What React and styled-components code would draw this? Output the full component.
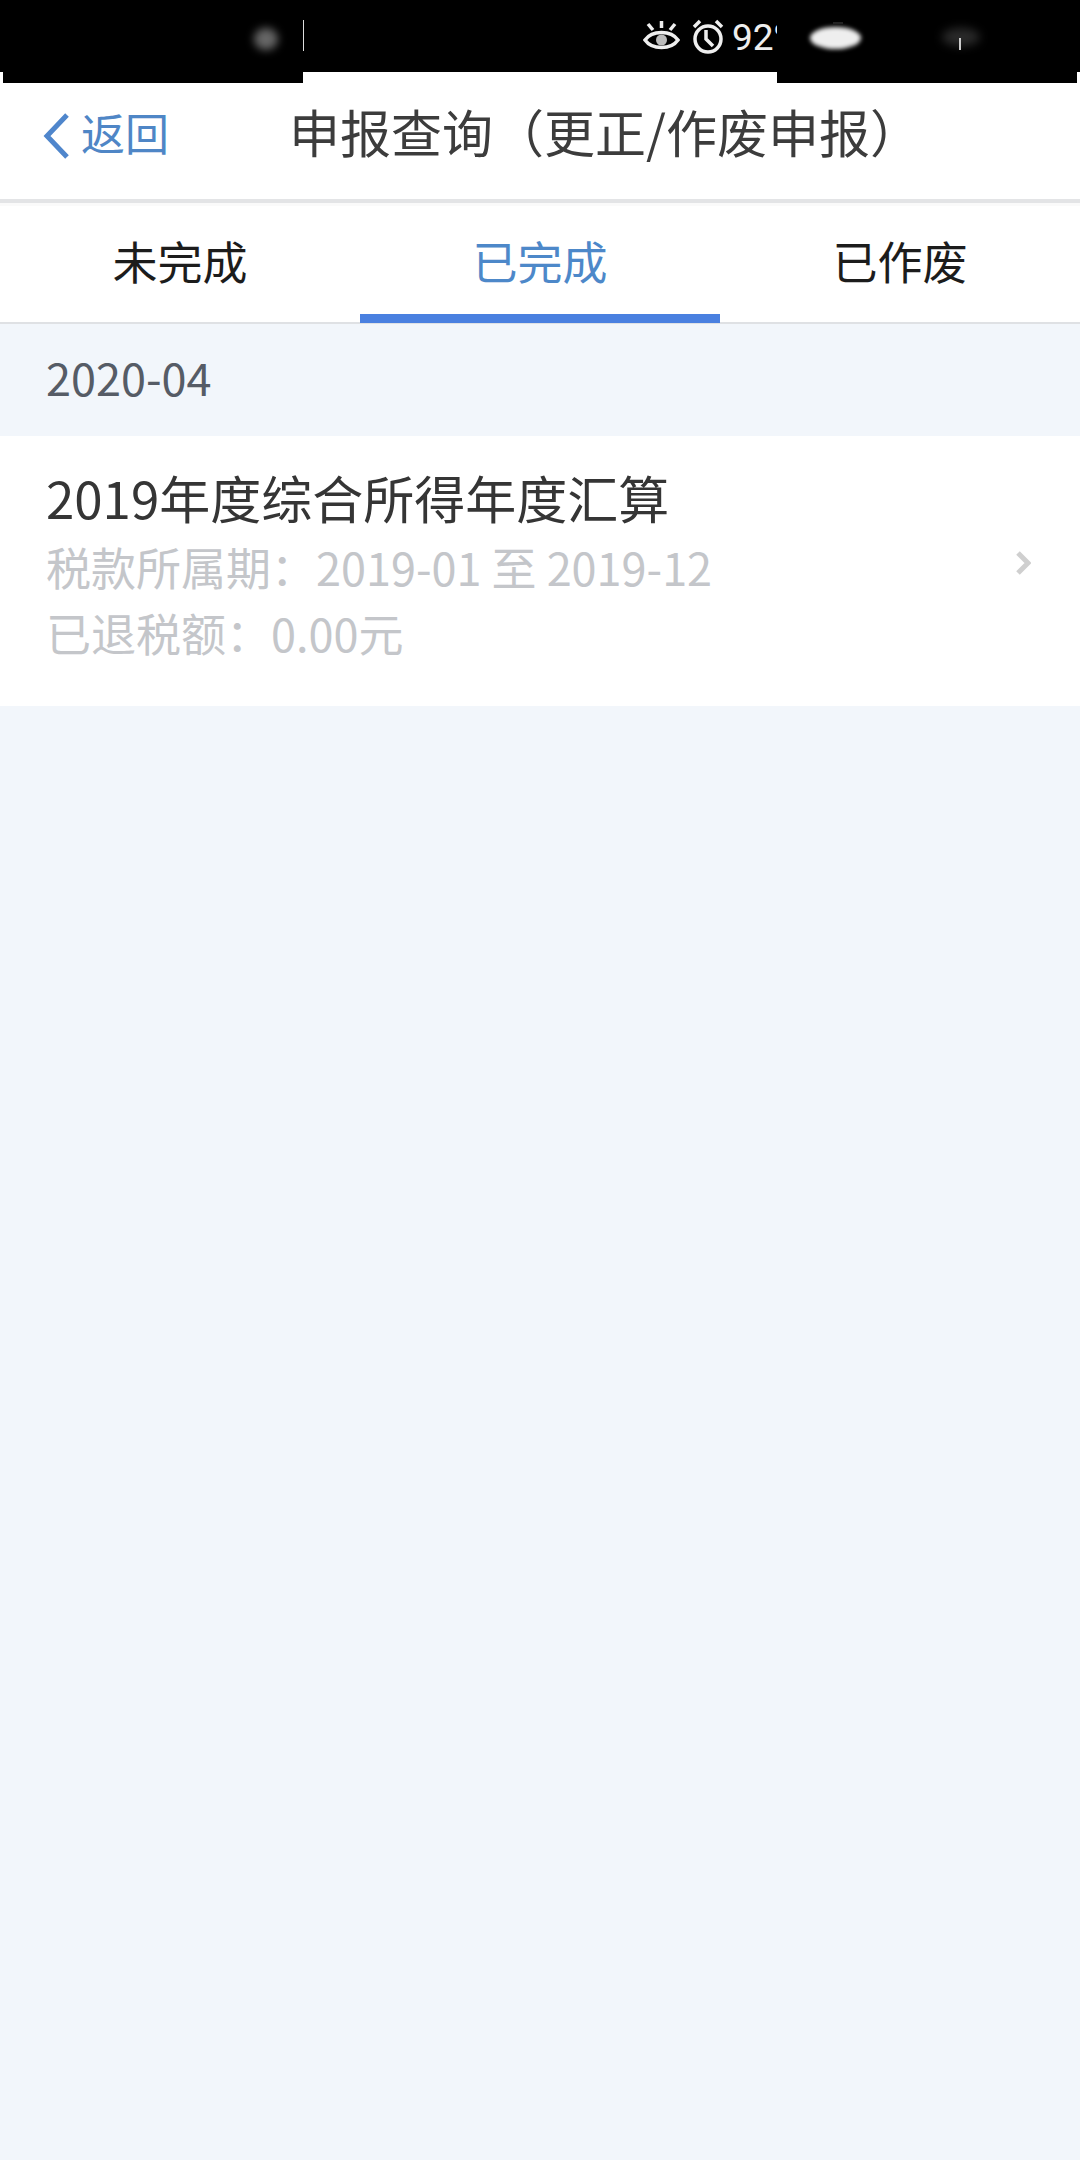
import React from 'react';
import styled, { createGlobalStyle } from 'styled-components';

const Global = createGlobalStyle`
	html, body {
		margin: 0;
		padding: 0;
		background: #f2f6fb;
	}
	body {
		font-family: "Noto Sans CJK SC", "Noto Sans", sans-serif;
	}
`;

const Page = styled.div`
	width: 1080px;
	height: 2160px;
	background: #f2f6fb;
	overflow: hidden;
`;

const StatusBar = styled.div`
	position: relative;
	height: 72px;
	background: #000;
	display: flex;
	align-items: center;
	padding-left: 643px;
	gap: 8px;
	color: #eee;
`;

const EyeIcon = styled.svg`
	display: block;
	margin-right: 4px;
`;

const Battery = styled.span`
	font-family: Roboto, sans-serif;
	font-size: 37px;
	line-height: 1;
	white-space: nowrap;
	margin-top: 2px;
`;

const Mask = styled.div`
	position: absolute;
	top: 0;
	height: 83px;
	background: #000;
	left: ${(props) => props.$left}px;
	width: ${(props) => props.$width}px;
`;

const Smudge = styled.div`
	position: absolute;
	left: ${(props) => props.$left}px;
	top: ${(props) => props.$top}px;
	width: ${(props) => props.$width}px;
	height: ${(props) => props.$height}px;
	background: ${(props) => props.$color};
	border-radius: 50%;
	filter: blur(${(props) => props.$blur}px);
`;

const Tick = styled.div`
	position: absolute;
	left: ${(props) => props.$left}px;
	top: ${(props) => props.$top}px;
	width: ${(props) => props.$width}px;
	height: ${(props) => props.$height}px;
	background: ${(props) => props.$color};
`;

const Header = styled.div`
	height: 127px;
	background: #fff;
	display: flex;
	align-items: center;
	padding-left: 43px;
	box-sizing: border-box;
`;

const Back = styled.div`
	display: flex;
	align-items: center;
	gap: 12px;
	width: 246px;
	flex: none;
`;

const BackLabel = styled.span`
	color: #4f86c6;
	font-size: 44px;
	line-height: 1;
	padding-bottom: 7px;
`;

const Title = styled.div`
	color: #3c3c3c;
	font-size: 51px;
	line-height: 1;
	white-space: nowrap;
	padding-bottom: 9px;
`;

const Divider = styled.div`
	height: 4px;
	background: #e3e4e6;
	border-bottom: 3px solid #fafafa;
`;

const Tabs = styled.div`
	display: grid;
	grid-template-columns: repeat(3, 1fr);
	height: 116px;
	background: #fff;
	border-bottom: 2px solid #dfe1e4;
`;

const Tab = styled.div`
	display: flex;
	align-items: center;
	justify-content: center;
	font-size: 45px;
	line-height: 1;
	box-sizing: border-box;
	color: ${(props) => (props.$active ? '#4d88c9' : '#1c1c1c')};
	border-bottom: 9px solid ${(props) => (props.$active ? '#4a80e0' : 'transparent')};
	margin-bottom: -1px;
`;

const DateBand = styled.div`
	height: 112px;
	display: flex;
	align-items: center;
	padding: 0 0 8px 46px;
	box-sizing: border-box;
	color: #565c66;
	font-size: 45px;
	line-height: 1;
`;

const Card = styled.div`
	height: 270px;
	background: #fff;
	display: flex;
	align-items: center;
	justify-content: space-between;
	padding: 0 49px 0 46px;
	box-sizing: border-box;
`;

const CardBody = styled.div`
	display: flex;
	flex-direction: column;
	padding-bottom: 16px;
`;

const CardTitle = styled.div`
	color: #353535;
	font-size: 51px;
	line-height: 74px;
`;

const CardMeta = styled.div`
	color: #c4c6ca;
	font-size: 45px;
	line-height: 66px;
	white-space: pre;
`;

const Chevron = styled.svg`
	display: block;
	margin-bottom: 16px;
`;

export default function App() {
	return (
		<Page>
			<Global />
			<StatusBar>
				<EyeIcon width="37" height="32" viewBox="0 0 37 32" fill="none" stroke="#eee" strokeWidth="3.5">
					<path d="M2 20 C9 10 28 10 35 20 C28 30 9 30 2 20 Z" />
					<circle cx="18.5" cy="20" r="5.5" fill="#bbb" stroke="none" />
					<path d="M18.5 1 V8 M5 4 L10 10 M32 4 L27 10" />
				</EyeIcon>
				<svg width="32" height="36" viewBox="0 0 32 36" fill="none" stroke="#eee" strokeWidth="3.5">
					<circle cx="16" cy="21" r="13" />
					<path d="M14 12 V21 L21 28" />
					<path d="M2 9 L8 3 M30 9 L24 3" />
				</svg>
				<Battery>92%</Battery>
				<Mask $left={3} $width={300} />
				<Tick $left={303} $top={20} $width={1} $height={31} $color="#ddd" />
				<Smudge $left={254} $top={28} $width={24} $height={22} $color="#666" $blur={4} />
				<Mask $left={777} $width={300} />
				<Smudge $left={810} $top={27} $width={51} $height={22} $color="#eee" $blur={2} />
				<Tick $left={833} $top={22} $width={10} $height={2} $color="#222" />
				<Smudge $left={942} $top={28} $width={38} $height={18} $color="#2a2a2a" $blur={5} />
				<Tick $left={959} $top={38} $width={2} $height={12} $color="#ccc" />
			</StatusBar>
			<Header>
				<Back>
					<svg width="26" height="46" viewBox="0 0 26 46" fill="none" stroke="#4f86cc" strokeWidth="5">
						<path d="M24 2 L4 23 L24 44" />
					</svg>
					<BackLabel>返回</BackLabel>
				</Back>
				<Title>申报查询（更正/作废申报）</Title>
			</Header>
			<Divider />
			<Tabs>
				<Tab>未完成</Tab>
				<Tab $active>已完成</Tab>
				<Tab>已作废</Tab>
			</Tabs>
			<DateBand>2020-04</DateBand>
			<Card>
				<CardBody>
					<CardTitle>2019年度综合所得年度汇算</CardTitle>
					<CardMeta>税款所属期：2019-01 至 2019-12</CardMeta>
					<CardMeta>已退税额：0.00元</CardMeta>
				</CardBody>
				<Chevron width="16" height="24" viewBox="0 0 16 24" fill="none" stroke="#cfcfcf" strokeWidth="5">
					<path d="M3 2 L13 12 L3 22" />
				</Chevron>
			</Card>
		</Page>
	);
}
